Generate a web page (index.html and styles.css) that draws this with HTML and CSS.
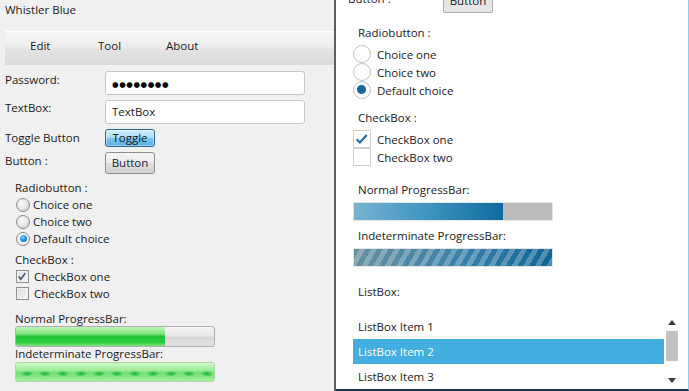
FILE: index.html
```html
<!DOCTYPE html>
<html>
	<head>
		<meta charset="utf-8">
		<meta name="viewport" content="width=device-width, initial-scale=1.0">
		<title>Whistler Blue</title>
		<link rel="stylesheet" href="styles.css">
	</head>
	<body>
		<!-- 左边 Whistler Blue 主题 -->
		<div class="left">
			<div class="app-title">Whistler Blue</div>
			<div class="menu">
				<span class="menu-item">Edit</span>
				<span class="menu-item">Tool</span>
				<span class="menu-item">About</span>
			</div>

			<div class="row row-pass">
				<div class="row-label">Password:</div>
				<div class="textbox"><span class="dots">●●●●●●●●</span></div>
			</div>
			<div class="row row-text">
				<div class="row-label">TextBox:</div>
				<div class="textbox">TextBox</div>
			</div>
			<div class="row row-toggle">
				<div class="row-label">Toggle Button</div>
				<div class="btn btn-toggle">Toggle</div>
			</div>
			<div class="row row-btn">
				<div class="row-label">Button :</div>
				<div class="btn">Button</div>
			</div>

			<div class="group">
				<div class="group-title">Radiobutton :</div>
				<div class="radio"><span class="radio-mark"></span>Choice one</div>
				<div class="radio"><span class="radio-mark"></span>Choice two</div>
				<div class="radio"><span class="radio-mark checked"></span>Default choice</div>

				<div class="group-title check-title">CheckBox :</div>
				<div class="check">
					<span class="check-mark">
						<svg width="13" height="13" viewBox="0 0 13 13"><path d="M3 6.5 L5.3 9.5 L10 2.8" fill="none" stroke="#3b4a6e" stroke-width="1.6"/></svg>
					</span>CheckBox one
				</div>
				<div class="check"><span class="check-mark"></span>CheckBox two</div>

				<div class="bar-title">Normal ProgressBar:</div>
				<div class="progress"><div class="progress-fill" style="width: 75%"></div></div>
				<div class="bar-title bar-title2">Indeterminate ProgressBar:</div>
				<div class="progress progress-ind"></div>
			</div>
		</div>

		<!-- 右边 Windows 10 风格 已经往下滚了一点 -->
		<div class="right">
			<div class="r-row">
				<div class="r-label">Button :</div>
				<div class="r-btn">Button</div>
			</div>

			<div class="r-group">
				<div class="r-title">Radiobutton :</div>
				<div class="r-radio"><span class="r-radio-mark"></span>Choice one</div>
				<div class="r-radio"><span class="r-radio-mark"></span>Choice two</div>
				<div class="r-radio"><span class="r-radio-mark checked"></span>Default choice</div>

				<div class="r-title r-check-title">CheckBox :</div>
				<div class="r-check">
					<span class="r-check-mark">
						<svg width="18" height="18" viewBox="0 0 18 18"><path d="M3.8 9.2 L7.3 12.6 L14.6 4.8" fill="none" stroke="#1a6aa0" stroke-width="2.2"/></svg>
					</span>CheckBox one
				</div>
				<div class="r-check"><span class="r-check-mark"></span>CheckBox two</div>

				<div class="r-title r-bar-title">Normal ProgressBar:</div>
				<div class="r-progress"><div class="r-progress-fill" style="width: 75%"></div></div>
				<div class="r-title r-bar-title2">Indeterminate ProgressBar:</div>
				<div class="r-progress r-progress-ind"></div>

				<div class="r-title r-list-title">ListBox:</div>
				<div class="listbox">
					<div class="list-items">
						<div class="list-item">ListBox Item 1</div>
						<div class="list-item selected">ListBox Item 2</div>
						<div class="list-item">ListBox Item 3</div>
					</div>
					<div class="scrollbar">
						<div class="arrow-box"><span class="arrow-up"></span></div>
						<div class="thumb"></div>
						<div class="track"></div>
						<div class="arrow-box"><span class="arrow-down"></span></div>
					</div>
				</div>
			</div>
		</div>
	</body>
</html>
```

FILE: styles.css
```css
* {
	/* 清除默认边距 */
	margin: 0;
	padding: 0;
	box-sizing: border-box;
}

body {
	width: 689px;
	height: 391px;
	display: flex;
	overflow: hidden;
	background: #fff;
	font-family: "Open Sans", "Noto Sans", sans-serif;
	font-size: 11.5px;
	color: #1b1b1b;
}

/* ===== 左边 ===== */
.left {
	width: 336px;
	height: 391px;
	background: #f0f0f0;
	border-right: 2px solid #5e5e5e;
}

.app-title {
	height: 21px;
	line-height: 20px;
	padding-left: 5px;
}

.menu {
	display: flex;
	height: 34px;
	margin: 10px 0 0 5px;
	padding-left: 25px;
	border-top: 1px solid #fff;
	background: linear-gradient(#f7f7f7, #eeeeee 40%, #e3e3e3 55%, #dadada);
}

.menu-item {
	width: 68px;
	line-height: 28px;
}

.row {
	display: flex;
	margin-left: 5px;
	margin-top: 5px;
}

.row-label {
	width: 100px;
	line-height: 16px;
}

.row-pass {
	margin-top: 6px;
}

.row-pass .row-label {
	padding-top: 1px;
}

.row-toggle .row-label,
.row-btn .row-label {
	line-height: 18px;
}

.textbox {
	width: 200px;
	height: 24px;
	padding-left: 6px;
	line-height: 22px;
	background: #fff;
	border: 1px solid #c6c6c6;
	border-radius: 3px;
}

.dots {
	font-family: "DejaVu Sans", sans-serif;
	font-size: 7.5px;
	letter-spacing: 0.6px;
	color: #000;
}

.btn {
	width: 50px;
	height: 22px;
	line-height: 20px;
	text-align: center;
	color: #222238;
	border: 1px solid #8f8f8f;
	border-radius: 3px;
	background: linear-gradient(#f5f5f5, #ececec 48%, #dedede 52%, #d2d2d2);
}

.btn-toggle {
	height: 18px;
	line-height: 16px;
	color: #111;
	border-color: #2f6690;
	background: linear-gradient(#d2edfb, #aadcf7 48%, #7fc4ee 52%, #5aafe2);
	box-shadow: inset 0 0 0 1px rgba(255, 255, 255, 0.4);
}

.group {
	padding-left: 15px;
}

.group-title {
	margin-top: 6px;
	line-height: 16px;
}

.radio,
.check {
	display: flex;
	align-items: center;
	height: 17px;
}

.radio-mark {
	width: 14px;
	height: 14px;
	margin: 0 3px 0 1px;
	border: 1px solid #8c8c8c;
	border-radius: 50%;
	background: radial-gradient(circle at 40% 35%, #fdfdfd, #e2e2e2 55%, #c4c4c4);
	position: relative;
}

.radio-mark.checked {
	background: radial-gradient(circle at 40% 35%, #ffffff, #f0f0f0 60%, #d8d8d8);
}

/* 选中的小圆点 */
.radio-mark.checked::after {
	content: "";
	position: absolute;
	left: 2.5px;
	top: 2.5px;
	width: 7px;
	height: 7px;
	border-radius: 50%;
	background: radial-gradient(circle at 40% 35%, #7fd6ff, #1a8fe0 50%, #0a5ba6);
}

.check-title {
	margin-top: 5px;
}

.check-mark {
	width: 13px;
	height: 13px;
	margin: 0 5px 0 1px;
	border: 1px solid #8e8f8f;
	background: linear-gradient(135deg, #dcdcdc, #f6f6f6);
	box-shadow: inset 0 0 0 1px #f4f4f4;
	display: flex;
}

.check-mark svg {
	margin: -1px 0 0 -1px;
}

.bar-title {
	margin-top: 10px;
	line-height: 14px;
}

.bar-title2 {
	margin-top: 0;
}

.progress {
	width: 200px;
	height: 21px;
	border: 1px solid #b0b0b0;
	border-radius: 3px;
	overflow: hidden;
	background: linear-gradient(#f4f4f4, #e8e8e8 45%, #d6d6d6 55%, #e2e2e2);
}

.bar-title2 + .progress {
	margin-top: 1px;
	height: 20px;
}

.progress-fill {
	height: 100%;
	background: linear-gradient(#bdf3b5, #86e584 35%, #1ec435 50%, #2ccb40 80%, #7fe17f);
}

.progress-ind {
	border-color: #a9dca4;
	background:
		radial-gradient(ellipse 6.5px 3px at 50% 60%, #16b82e, rgba(24, 187, 48, 0)),
		linear-gradient(#d0f7cb, #9bec97 40%, #6fe075 55%, #a8efa3);
	background-size: 18px 100%, 100% 100%;
	background-position: 2px 0, 0 0;
}

/* ===== 右边 ===== */
.right {
	flex: 1;
	height: 391px;
	background: #fff;
	border-right: 1px solid #86cff5;
	border-bottom: 2px solid #1d3b5c;
	overflow: hidden;
	position: relative;
}

/* 右边框上的一小段深色 */
.right::after {
	content: "";
	position: absolute;
	right: -1px;
	top: 71px;
	width: 1px;
	height: 11px;
	background: #1d4b7a;
}

.r-row {
	display: flex;
	margin-top: -10px;
	padding-left: 12px;
}

.r-label {
	width: 95px;
	line-height: 18px;
}

.r-btn {
	width: 50px;
	height: 23px;
	line-height: 20px;
	text-align: center;
	border: 1px solid #adadad;
	border-radius: 2px;
	background: #e6e6e6;
}

.r-group {
	padding-left: 17px;
}

.r-title {
	padding-left: 5px;
	margin-top: 12px;
	line-height: 16px;
}

.r-radio,
.r-check {
	display: flex;
	align-items: center;
	height: 18px;
}

.r-radio:nth-child(2) {
	margin-top: 4px;
}

.r-radio-mark {
	width: 18px;
	height: 18px;
	margin-right: 6px;
	border: 1.5px solid #c4c4c4;
	border-radius: 50%;
	background: #fff;
	position: relative;
}

.r-radio-mark.checked::after {
	content: "";
	position: absolute;
	left: 3px;
	top: 3px;
	width: 9px;
	height: 9px;
	border-radius: 50%;
	background: #17699c;
}

.r-check-title {
	margin-top: 11px;
}

.r-check-title + .r-check {
	margin-top: 4px;
}

.r-check-mark {
	width: 18px;
	height: 18px;
	margin-right: 6px;
	border: 1px solid #cfcfcf;
	display: flex;
}

.r-check-mark svg {
	margin: -1px 0 0 -1px;
}

.r-bar-title {
	margin-top: 16px;
}

.r-progress {
	width: 200px;
	height: 19px;
	margin-top: 4px;
	background: #bcbcbc;
	border: 1px solid #e4e4e4;
}

.r-progress-fill {
	height: 100%;
	background: linear-gradient(to right, #78b3d2, #3f93bf 50%, #0e6b9c);
}

.r-bar-title2 {
	margin-top: 7px;
}

.r-progress-ind {
	background:
		repeating-linear-gradient(-60deg, rgba(255, 255, 255, 0.26) 0 5px, rgba(255, 255, 255, 0) 5px 10px),
		linear-gradient(to right, #64909f, #3a80a8 55%, #0d6594);
}

.r-list-title {
	margin-top: 17px;
}

.listbox {
	display: flex;
	margin-top: 14px;
	height: 75px;
}

.list-items {
	width: 311px;
}

.list-item {
	height: 25px;
	line-height: 25px;
	padding-left: 5px;
}

.list-item.selected {
	background: #42afe0;
	color: #fff;
}

.scrollbar {
	width: 15px;
	display: flex;
	flex-direction: column;
	align-items: center;
}

.arrow-box {
	height: 17px;
	display: flex;
	align-items: center;
	justify-content: center;
}

.arrow-box:last-child {
	height: 18px;
}

.arrow-up {
	border-left: 4.5px solid transparent;
	border-right: 4.5px solid transparent;
	border-bottom: 5px solid #3a3a3a;
}

.arrow-down {
	border-left: 4.5px solid transparent;
	border-right: 4.5px solid transparent;
	border-top: 5px solid #3a3a3a;
}

.thumb {
	width: 12px;
	height: 30px;
	background: #c2c2c2;
}

.track {
	flex: 1;
}
```
